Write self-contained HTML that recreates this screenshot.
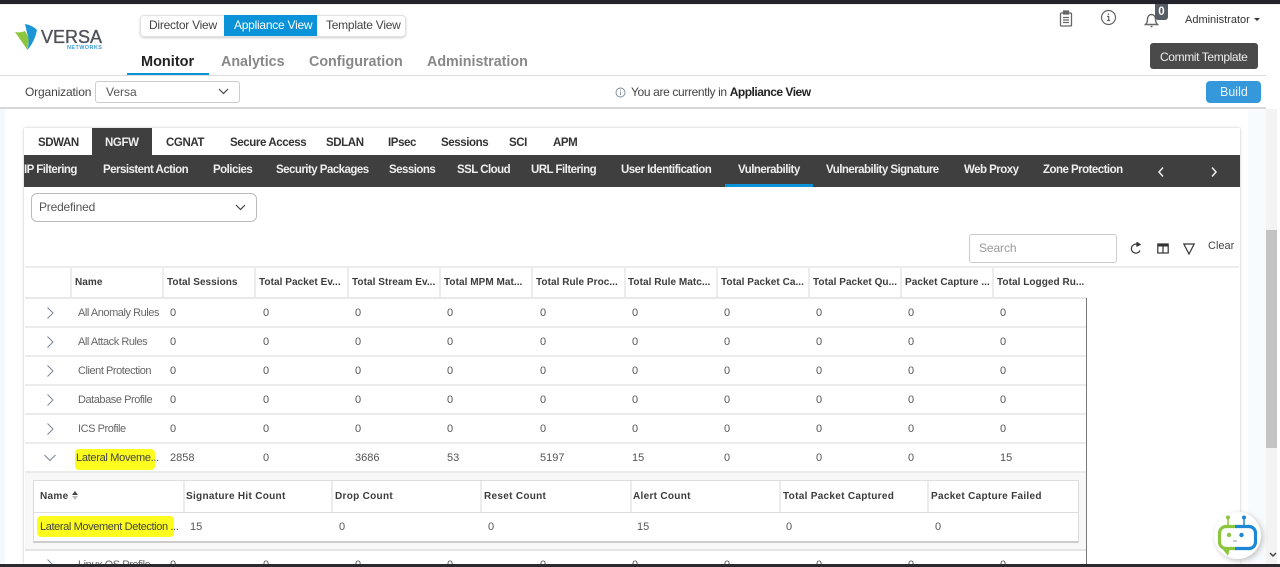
<!DOCTYPE html>
<html><head><meta charset="utf-8"><style>
html,body{margin:0;padding:0;width:1280px;height:567px;overflow:hidden;background:#fff;font-family:"Liberation Sans",sans-serif;color:#333}
.a{position:absolute}
.t{position:absolute;white-space:nowrap;line-height:14px}
.v{background:#ececec;width:2px}
.h{font-weight:bold;font-size:10px;letter-spacing:.05px;color:#3c3c3c;top:276px}
.hn{font-weight:bold;font-size:10px;letter-spacing:.3px;color:#3c3c3c;top:490px}
.s{font-size:11.5px;font-weight:bold;letter-spacing:-.4px;color:#333;top:136px}
.n{font-size:11.5px;font-weight:bold;letter-spacing:-.53px;color:#eee;top:163px}
.row{position:absolute;left:25px;width:1061px;height:27px;border-bottom:2px solid #ebebeb;font-size:11px;color:#555}
.row span{position:absolute;top:7px;line-height:14px;white-space:nowrap}
.row span:first-of-type{letter-spacing:-.45px;color:#666}
.row svg{position:absolute;left:19px;top:7px}
.m{font-size:14.3px;font-weight:bold;color:#888;top:55px}
.vw{font-size:12px;letter-spacing:-.25px;top:18px;color:#444}
</style></head><body>
<div class="a" style="left:0;top:0;width:1280px;height:4px;background:#23232b"></div>
<div class="a" style="left:0;top:4px;width:1280px;height:1px;background:#eee"></div>

<svg class="a" style="left:14px;top:24px" width="26" height="28" viewBox="0 0 26 28"><path d="M1 8Q7 9 11 7L15 14L13.500 26Z" fill="#8cc63f"/><path d="M11 0Q18 1 23 6Q21 17 13.500 26Q16 15 13 9Q12 4 11 0Z" fill="#1b95d6"/></svg>
<div class="t" style="left:41px;top:27px;font-size:18px;line-height:20px;color:#4f5359;-webkit-text-stroke:.35px #4f5359">VERSA</div>
<div class="t" style="left:67px;top:45px;font-size:5.500px;line-height:7px;color:#3b9fdc;font-weight:bold;letter-spacing:.4px">NETWORKS</div>

<div class="a" style="left:140px;top:15px;width:264px;height:20px;border:1px solid #e2e2e2;border-radius:4px;box-shadow:0 1px 2px #ccc"></div>
<div class="a" style="left:224px;top:15px;width:93px;height:21px;background:#0b93d9"></div>
<div class="t vw" style="left:149px">Director View</div>
<div class="t vw" style="left:234px;color:#fff">Appliance View</div>
<div class="t vw" style="left:326px">Template View</div>

<div class="t m" style="left:141px;color:#222;font-size:14.500px">Monitor</div>
<div class="t m" style="left:221px">Analytics</div>
<div class="t m" style="left:309px">Configuration</div>
<div class="t m" style="left:427px">Administration</div>
<div class="a" style="left:127px;top:73px;width:82px;height:2px;background:#0b93d9"></div>
<div class="a" style="left:0;top:75px;width:1266px;height:1px;background:#ddd"></div>

<svg class="a" style="left:1058px;top:10px" width="16" height="17" viewBox="0 0 16 17" fill="none" stroke="#666" stroke-width="1.300"><rect x="2.500" y="3" width="11" height="13" rx="1"/><rect x="5.500" y="1" width="5" height="3" fill="#666"/><path d="M5 7.500h6M5 10h6M5 12.500h6"/></svg>
<svg class="a" style="left:1100px;top:9px" width="17" height="17" viewBox="0 0 17 17" fill="none" stroke="#666" stroke-width="1.200"><circle cx="8.500" cy="8.500" r="7"/><path d="M7 7.500h1.700v4M7 11.500h3.200M8.500 4.500v1.400"/></svg>
<svg class="a" style="left:1144px;top:12px" width="16" height="16" viewBox="0 0 16 16" fill="none" stroke="#666" stroke-width="1.400"><path d="M1.500 12.500h12c-1.500-1.500-2-3-2-5.500 0-2.500-1.800-4.500-4-4.500S3.500 4.500 3.500 7c0 2.500-.5 4-2 5.500ZM6.500 14.500h2"/></svg>
<div class="t" style="left:1155px;top:4px;width:13px;height:16px;background:#565c63;border-radius:0 0 3px 3px;color:#fff;font-weight:bold;font-size:11.500px;text-align:center;line-height:17px">0</div>
<div class="t" style="left:1185px;top:13px;font-size:11px;color:#333">Administrator</div>
<div class="a" style="left:1254px;top:18px;border:3px solid transparent;border-top-color:#333;border-bottom:0"></div>

<div class="a" style="left:1150px;top:43px;width:108px;height:26px;background:#4a4a4a;border-radius:3px"></div>
<div class="t" style="left:1160px;top:50px;font-size:12px;color:#eee;letter-spacing:-.38px">Commit Template</div>

<div class="t" style="left:25px;top:85px;font-size:12px;color:#444;letter-spacing:-.15px">Organization</div>
<div class="a" style="left:95px;top:81px;width:143px;height:20px;border:1px solid #ccc;border-radius:3px"></div>
<div class="t" style="left:106px;top:85px;font-size:12px;color:#555">Versa</div>
<svg class="a" style="left:218px;top:88px" width="11" height="7" viewBox="0 0 11 7" fill="none" stroke="#444" stroke-width="1.200"><path d="M1 1l4.500 4.500L10 1"/></svg>
<svg class="a" style="left:615px;top:87px" width="11" height="11" viewBox="0 0 11 11" fill="none" stroke="#7a8a96" stroke-width=".9"><circle cx="5.500" cy="5.500" r="4.500"/><path d="M5.500 4.500v3.500M5.500 2.500v1"/></svg>
<div class="t" style="left:631px;top:85px;font-size:12px;color:#444;letter-spacing:-.36px">You are currently in <b style="color:#222;letter-spacing:-.5px">Appliance View</b></div>
<div class="a" style="left:1206px;top:81px;width:55px;height:22px;background:#3498db;border-radius:4px"></div>
<div class="t" style="left:1220px;top:85px;font-size:12.500px;color:#e8f4fc">Build</div>
<div class="a" style="left:0;top:107px;width:1266px;height:2px;background:#d8d8d8"></div>

<div class="a" style="left:0;top:109px;width:5px;height:455px;background:#f3f8fc"></div>
<div class="a" style="left:1248px;top:109px;width:18px;height:455px;background:#f8fbfd"></div>
<div class="a" style="left:1266px;top:109px;width:11px;height:455px;background:#f3f3f3"></div>
<div class="a" style="left:1266px;top:230px;width:11px;height:218px;background:#c4c4c4"></div>
<svg class="a" style="left:1269px;top:552px" width="8" height="6" viewBox="0 0 8 6" fill="none" stroke="#444" stroke-width="1.500"><path d="M1 1l3 3 3-3"/></svg>

<div class="a" style="left:24px;top:128px;width:1216px;height:436px;background:#fff;box-shadow:0 0 3px #c4c4c4"></div>

<div class="a" style="left:92px;top:128px;width:60px;height:27px;background:#3f3f3f"></div>
<div class="t s" style="left:38px">SDWAN</div>
<div class="t s" style="left:105px;color:#eee">NGFW</div>
<div class="t s" style="left:166px">CGNAT</div>
<div class="t s" style="left:230px">Secure Access</div>
<div class="t s" style="left:326px">SDLAN</div>
<div class="t s" style="left:388px">IPsec</div>
<div class="t s" style="left:441px">Sessions</div>
<div class="t s" style="left:509px">SCI</div>
<div class="t s" style="left:553px">APM</div>

<div class="a" style="left:24px;top:155px;width:1216px;height:32px;background:#3f3f3f"></div>
<div class="t n" style="left:24px">IP Filtering</div>
<div class="t n" style="left:103px">Persistent Action</div>
<div class="t n" style="left:213px">Policies</div>
<div class="t n" style="left:276px">Security Packages</div>
<div class="t n" style="left:389px">Sessions</div>
<div class="t n" style="left:457px">SSL Cloud</div>
<div class="t n" style="left:531px">URL Filtering</div>
<div class="t n" style="left:621px">User Identification</div>
<div class="t n" style="left:738px">Vulnerability</div>
<div class="t n" style="left:826px">Vulnerability Signature</div>
<div class="t n" style="left:964px">Web Proxy</div>
<div class="t n" style="left:1043px">Zone Protection</div>
<div class="a" style="left:725px;top:184px;width:88px;height:3px;background:#0b93d9"></div>
<svg class="a" style="left:1157px;top:166px" width="8" height="12" viewBox="0 0 8 12" fill="none" stroke="#eee" stroke-width="1.500"><path d="M6 1.500L2 6l4 4.500"/></svg>
<svg class="a" style="left:1210px;top:166px" width="8" height="12" viewBox="0 0 8 12" fill="none" stroke="#eee" stroke-width="1.500"><path d="M2 1.500L6 6l-4 4.500"/></svg>

<div class="a" style="left:31px;top:193px;width:224px;height:27px;border:1px solid #bbb;border-radius:6px"></div>
<div class="t" style="left:39px;top:200px;font-size:12px;color:#555;letter-spacing:-.2px">Predefined</div>
<svg class="a" style="left:235px;top:204px" width="11" height="7" viewBox="0 0 11 7" fill="none" stroke="#444" stroke-width="1.200"><path d="M1 1l4.500 4.500L10 1"/></svg>

<div class="a" style="left:969px;top:234px;width:146px;height:27px;border:1px solid #ccc;border-radius:3px"></div>
<div class="t" style="left:979px;top:241px;font-size:12px;color:#999;letter-spacing:-.1px">Search</div>
<svg class="a" style="left:1130px;top:242px" width="12" height="13" viewBox="0 0 12 13" fill="none" stroke="#333" stroke-width="1.200"><path d="M10 8.500A4.500 4.500 0 1 1 7 2.300"/><path d="M7 .5l3 2-3 1.500z" fill="#333"/></svg>
<svg class="a" style="left:1157px;top:243px" width="12" height="11" viewBox="0 0 12 11" fill="none" stroke="#333" stroke-width="1.200"><rect x=".8" y="1" width="10.400" height="9"/><path d="M1 2.500h10" stroke-width="2"/><path d="M6 2v8"/></svg>
<svg class="a" style="left:1183px;top:243px" width="12" height="12" viewBox="0 0 12 12" fill="none" stroke="#333" stroke-width="1.200"><path d="M.8 1h10.400L6 11z"/></svg>
<div class="t" style="left:1208px;top:239px;font-size:11px;color:#444">Clear</div>

<div class="a" style="left:25px;top:266px;width:1214px;height:2px;background:#ececec"></div>
<div class="a" style="left:25px;top:297px;width:1061px;height:2px;background:#e8e8e8"></div>
<div class="a v" style="left:70px;top:268px;height:29px"></div>
<div class="a v" style="left:162px;top:268px;height:29px"></div>
<div class="a v" style="left:254px;top:268px;height:29px"></div>
<div class="a v" style="left:347px;top:268px;height:29px"></div>
<div class="a v" style="left:439px;top:268px;height:29px"></div>
<div class="a v" style="left:531px;top:268px;height:29px"></div>
<div class="a v" style="left:624px;top:268px;height:29px"></div>
<div class="a v" style="left:716px;top:268px;height:29px"></div>
<div class="a v" style="left:808px;top:268px;height:29px"></div>
<div class="a v" style="left:900px;top:268px;height:29px"></div>
<div class="a v" style="left:992px;top:268px;height:29px"></div>
<div class="t h" style="left:75px">Name</div>
<div class="t h" style="left:167px">Total Sessions</div>
<div class="t h" style="left:259px">Total Packet Ev...</div>
<div class="t h" style="left:352px">Total Stream Ev...</div>
<div class="t h" style="left:444px">Total MPM Mat...</div>
<div class="t h" style="left:536px">Total Rule Proc...</div>
<div class="t h" style="left:628px">Total Rule Matc...</div>
<div class="t h" style="left:721px">Total Packet Ca...</div>
<div class="t h" style="left:813px">Total Packet Qu...</div>
<div class="t h" style="left:905px">Packet Capture ...</div>
<div class="t h" style="left:997px">Total Logged Ru...</div>

<div class="row" style="top:299px"><svg width="12" height="14" viewBox="0 0 12 14" fill="none" stroke="#7a8698"><path d="M3.500 1.500L9 7l-5.500 5.500"/></svg><span style="left:53px">All Anomaly Rules</span><span style="left:145px">0</span><span style="left:238px">0</span><span style="left:330px">0</span><span style="left:422px">0</span><span style="left:515px">0</span><span style="left:607px">0</span><span style="left:699px">0</span><span style="left:791px">0</span><span style="left:883px">0</span><span style="left:975px">0</span></div>
<div class="row" style="top:328px"><svg width="12" height="14" viewBox="0 0 12 14" fill="none" stroke="#7a8698"><path d="M3.500 1.500L9 7l-5.500 5.500"/></svg><span style="left:53px">All Attack Rules</span><span style="left:145px">0</span><span style="left:238px">0</span><span style="left:330px">0</span><span style="left:422px">0</span><span style="left:515px">0</span><span style="left:607px">0</span><span style="left:699px">0</span><span style="left:791px">0</span><span style="left:883px">0</span><span style="left:975px">0</span></div>
<div class="row" style="top:357px"><svg width="12" height="14" viewBox="0 0 12 14" fill="none" stroke="#7a8698"><path d="M3.500 1.500L9 7l-5.500 5.500"/></svg><span style="left:53px">Client Protection</span><span style="left:145px">0</span><span style="left:238px">0</span><span style="left:330px">0</span><span style="left:422px">0</span><span style="left:515px">0</span><span style="left:607px">0</span><span style="left:699px">0</span><span style="left:791px">0</span><span style="left:883px">0</span><span style="left:975px">0</span></div>
<div class="row" style="top:386px"><svg width="12" height="14" viewBox="0 0 12 14" fill="none" stroke="#7a8698"><path d="M3.500 1.500L9 7l-5.500 5.500"/></svg><span style="left:53px">Database Profile</span><span style="left:145px">0</span><span style="left:238px">0</span><span style="left:330px">0</span><span style="left:422px">0</span><span style="left:515px">0</span><span style="left:607px">0</span><span style="left:699px">0</span><span style="left:791px">0</span><span style="left:883px">0</span><span style="left:975px">0</span></div>
<div class="row" style="top:415px"><svg width="12" height="14" viewBox="0 0 12 14" fill="none" stroke="#7a8698"><path d="M3.500 1.500L9 7l-5.500 5.500"/></svg><span style="left:53px">ICS Profile</span><span style="left:145px">0</span><span style="left:238px">0</span><span style="left:330px">0</span><span style="left:422px">0</span><span style="left:515px">0</span><span style="left:607px">0</span><span style="left:699px">0</span><span style="left:791px">0</span><span style="left:883px">0</span><span style="left:975px">0</span></div>
<div class="a" style="left:75px;top:449px;width:80px;height:21px;background:#fcfc1e;border-radius:4px"></div>
<div class="row" style="top:444px"><svg width="14" height="12" viewBox="0 0 14 12" fill="none" stroke="#7a8698" style="left:18px;top:8px"><path d="M1.500 3L7 8.500 12.500 3"/></svg><span style="left:51px;letter-spacing:-.3px;color:#444">Lateral Moveme...</span><span style="left:145px">2858</span><span style="left:238px">0</span><span style="left:330px">3686</span><span style="left:422px">53</span><span style="left:515px">5197</span><span style="left:607px">15</span><span style="left:699px">0</span><span style="left:791px">0</span><span style="left:883px">0</span><span style="left:975px">15</span></div>

<div class="a" style="left:25px;top:473px;width:1061px;height:76px;background:#f8f8f8;border-bottom:2px solid #e4e4e4"></div>
<div class="a" style="left:33px;top:480px;width:1044px;height:60px;background:#fff;border:1px solid #ddd;border-bottom:2px solid #ccc"></div>
<div class="a" style="left:34px;top:512px;width:1044px;height:1px;background:#ddd"></div>
<div class="a v" style="left:183px;top:481px;height:31px"></div>
<div class="a v" style="left:331px;top:481px;height:31px"></div>
<div class="a v" style="left:480px;top:481px;height:31px"></div>
<div class="a v" style="left:630px;top:481px;height:31px"></div>
<div class="a v" style="left:779px;top:481px;height:31px"></div>
<div class="a v" style="left:927px;top:481px;height:31px"></div>
<div class="t hn" style="left:40px">Name</div>
<div class="a" style="left:72px;top:491px;border:3px solid transparent;border-bottom:4px solid #444;border-top:0"></div>
<div class="a" style="left:72px;top:496px;border:3px solid transparent;border-top:4px solid #bbb;border-bottom:0"></div>
<div class="t hn" style="left:186px">Signature Hit Count</div>
<div class="t hn" style="left:335px">Drop Count</div>
<div class="t hn" style="left:484px">Reset Count</div>
<div class="t hn" style="left:633px">Alert Count</div>
<div class="t hn" style="left:783px">Total Packet Captured</div>
<div class="t hn" style="left:931px">Packet Capture Failed</div>
<div class="a" style="left:37px;top:516px;width:137px;height:21px;background:#fcfc1e;border-radius:4px"></div>
<div class="t" style="left:40px;top:520px;font-size:11px;color:#444;letter-spacing:-.38px">Lateral Movement Detection ...</div>
<div class="t" style="left:190px;top:520px;font-size:11px;color:#555">15</div>
<div class="t" style="left:339px;top:520px;font-size:11px;color:#555">0</div>
<div class="t" style="left:488px;top:520px;font-size:11px;color:#555">0</div>
<div class="t" style="left:637px;top:520px;font-size:11px;color:#555">15</div>
<div class="t" style="left:786px;top:520px;font-size:11px;color:#555">0</div>
<div class="t" style="left:935px;top:520px;font-size:11px;color:#555">0</div>

<div class="row" style="top:551px;height:13px;border:0;overflow:hidden"><svg width="12" height="14" viewBox="0 0 12 14" fill="none" stroke="#7a8698"><path d="M3.500 1.500L9 7l-5.500 5.500"/></svg><span style="left:53px">Linux OS Profile</span><span style="left:145px">0</span><span style="left:238px">0</span><span style="left:330px">0</span><span style="left:422px">0</span><span style="left:515px">0</span><span style="left:607px">0</span><span style="left:699px">0</span><span style="left:791px">0</span><span style="left:883px">0</span><span style="left:975px">0</span></div>
<div class="a" style="left:1086px;top:298px;width:1px;height:266px;background:#777"></div>

<div class="a" style="left:1214px;top:512px;width:47px;height:47px;border-radius:50%;background:#fff;box-shadow:2px 2px 6px #c4c4c4"></div>
<svg class="a" style="left:1216px;top:514px" width="44" height="46" viewBox="0 0 44 46" fill="none" stroke-width="3.200"><path d="M19 12.500H10a6.500 6.500 0 0 0-6.500 6.500v9a6.500 6.500 0 0 0 6.500 6.500h9" stroke="#8cc63f"/><path d="M19 12.500h14a6.500 6.500 0 0 1 6.500 6.500v9a6.500 6.500 0 0 1-6.500 6.500H19" stroke="#1b87d6"/><path d="M5 33l7 9 2-8z" fill="#8cc63f" stroke="none"/><path d="M12 12V5" stroke="#8cc63f" stroke-width="1.500"/><path d="M28 12V5" stroke="#1b87d6" stroke-width="1.500"/><circle cx="12" cy="3.500" r="2" fill="#8cc63f" stroke="none"/><circle cx="28" cy="3.500" r="2" fill="#1b87d6" stroke="none"/><circle cx="13" cy="21" r="2.200" fill="#8cc63f" stroke="none"/><circle cx="25.500" cy="21" r="2.200" fill="#1b87d6" stroke="none"/><path d="M17 27h4" stroke="#999" stroke-width="1"/></svg>

<div class="a" style="left:0;top:564px;width:1280px;height:3px;background:#2b2b2f"></div>
</body></html>
